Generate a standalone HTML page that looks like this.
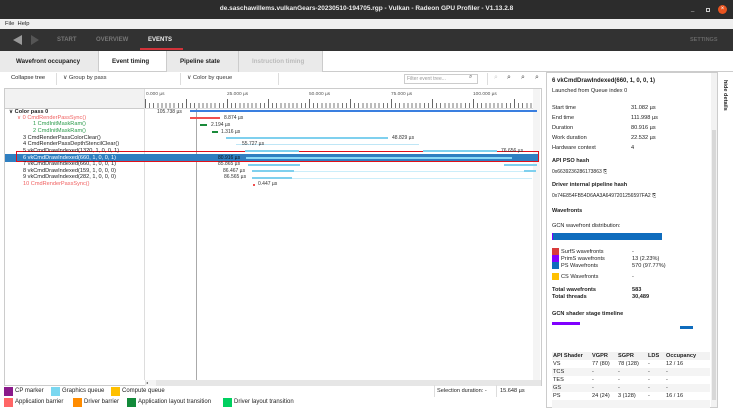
<!DOCTYPE html>
<html><head><meta charset="utf-8"><style>
*{margin:0;padding:0;box-sizing:border-box}
body{width:733px;height:412px;overflow:hidden;background:#fff;font-family:"Liberation Sans",sans-serif;font-size:6px;color:#222;position:relative}
.a{position:absolute;white-space:nowrap}
.b{font-weight:bold}
.bar{position:absolute;height:2px}
.lb{position:absolute;font-size:5px;color:#333;white-space:nowrap}
.r{position:absolute;font-size:5.6px;white-space:nowrap}
</style></head><body>
<!-- title bar -->
<div class="a" style="left:0;top:0;width:733px;height:19px;background:#2c2c2c"></div>
<div class="a b" style="left:0;width:733px;top:5px;text-align:center;color:#eee;font-size:6.5px">de.saschawillems.vulkanGears-20230510-194705.rgp - Vulkan - Radeon GPU Profiler - V1.13.2.8</div>
<div class="a" style="left:691px;top:6px;color:#ccc;font-size:6px">_</div>
<div class="a" style="left:706px;top:8px;width:4px;height:4px;border:1px solid #ccc"></div>
<div class="a" style="left:718px;top:5px;width:9px;height:9px;border-radius:50%;background:#e95420;color:#fff;font-size:6px;text-align:center;line-height:9px">×</div>
<!-- menu -->
<div class="a" style="left:0;top:19px;width:733px;height:10px;background:#efefef"></div>
<div class="a" style="left:5px;top:21px;font-size:5.8px">File&nbsp;&nbsp;Help</div>
<!-- nav -->
<div class="a" style="left:0;top:29px;width:733px;height:22px;background:#323232"></div>
<div class="a" style="left:13px;top:35px;width:0;height:0;border-top:5px solid transparent;border-bottom:5px solid transparent;border-right:9px solid #999"></div>
<div class="a" style="left:31px;top:35px;width:0;height:0;border-top:5px solid transparent;border-bottom:5px solid transparent;border-left:8px solid #555"></div>
<div class="a b" style="left:57px;top:37px;color:#777;font-size:6px">START</div>
<div class="a b" style="left:96px;top:37px;color:#777;font-size:6px">OVERVIEW</div>
<div class="a b" style="left:148px;top:37px;color:#eee;font-size:6px">EVENTS</div>
<div class="a" style="left:140px;top:48px;width:43px;height:2px;background:#d2333a"></div>
<div class="a b" style="left:690px;top:37px;color:#666;font-size:5.5px">SETTINGS</div>
<!-- tabs -->
<div class="a" style="left:0;top:51px;width:733px;height:21px;background:#fff;border-bottom:1px solid #ccc"></div>
<div class="a" style="left:0;top:51px;width:99px;height:21px;background:#eaeaea;border-right:1px solid #ccc"></div>
<div class="a" style="left:166px;top:51px;width:72px;height:21px;background:#eaeaea;border-left:1px solid #ccc"></div>
<div class="a" style="left:238px;top:51px;width:85px;height:21px;background:#eaeaea;border-left:1px solid #ccc;border-right:1px solid #ccc"></div>
<div class="a b" style="left:16px;top:58px;font-size:6.2px">Wavefront occupancy</div>
<div class="a b" style="left:112px;top:58px;font-size:6.2px">Event timing</div>
<div class="a b" style="left:180px;top:58px;font-size:6.2px">Pipeline state</div>
<div class="a b" style="left:252px;top:58px;font-size:6.2px;color:#bbb">Instruction timing</div>
<!-- toolbar -->
<div class="a" style="left:11px;top:75px;font-size:5.8px">Collapse tree</div>
<div class="a" style="left:56px;top:73px;width:1px;height:12px;background:#ddd"></div>
<div class="a" style="left:63px;top:75px;font-size:5.8px;color:#333">∨ Group by pass</div>
<div class="a" style="left:180px;top:73px;width:1px;height:12px;background:#ddd"></div>
<div class="a" style="left:187px;top:75px;font-size:5.8px;color:#333">∨ Color by queue</div>
<div class="a" style="left:278px;top:73px;width:1px;height:12px;background:#ddd"></div>
<div class="a" style="left:404px;top:74px;width:74px;height:10px;border:1px solid #ccc;font-size:5px;color:#999;padding:1px 2px">Filter event tree...</div>
<div class="a" style="left:469px;top:74px;font-size:6px;color:#555">⌕</div>
<div class="a" style="left:487px;top:73px;width:1px;height:12px;background:#ddd"></div>
<div class="a" style="left:494px;top:74px;font-size:7px;color:#ccc">⌕</div>
<div class="a" style="left:507px;top:74px;font-size:7px;color:#444">⌕</div>
<div class="a" style="left:521px;top:74px;font-size:7px;color:#444">⌕</div>
<div class="a" style="left:535px;top:74px;font-size:7px;color:#444">⌕</div>
<!-- tree area -->
<div class="a" style="left:4px;top:88px;width:538px;height:298px;border:1px solid #ccc"></div>
<div class="a" style="left:5px;top:89px;width:139px;height:20px;background:#f2f2f2;border-bottom:1px solid #ccc"></div>
<div class="a" style="left:144px;top:89px;width:1px;height:291px;background:#ddd"></div>
<div class="a" style="left:196px;top:108px;width:1px;height:272px;background:#aaa"></div>
<div class="a" style="left:145px;top:89px;width:388px;height:20px;background:#fff;border-bottom:1px solid #ddd"></div>
<div class="a" style="left:146px;top:92px;font-size:4.8px;color:#555">0.000 µs</div>
<div class="a" style="left:227px;top:92px;font-size:4.8px;color:#555">25.000 µs</div>
<div class="a" style="left:309px;top:92px;font-size:4.8px;color:#555">50.000 µs</div>
<div class="a" style="left:391px;top:92px;font-size:4.8px;color:#555">75.000 µs</div>
<div class="a" style="left:473px;top:92px;font-size:4.8px;color:#555">100.000 µs</div>
<div class="a" style="left:145px;top:103px;width:388px;height:5px;background:repeating-linear-gradient(90deg,#777 0 1px,transparent 1px 4.1px)"></div>
<div class="a" style="left:145px;top:99px;width:388px;height:9px;background:repeating-linear-gradient(90deg,#666 0 1px,transparent 1px 41px)"></div>
<div class="a" style="left:533px;top:89px;width:7px;height:291px;background:#f4f4f4"></div>
<!-- selected row -->
<div class="a" style="left:5px;top:154px;width:533px;height:8px;background:#2f7fc1"></div>
<div class="a" style="left:16px;top:151px;width:523px;height:11px;border:1.3px solid #e0101a"></div>
<!-- tree labels -->
<div class="r b" style="left:9px;top:109px">∨ Color pass 0</div>
<div class="r" style="left:17px;top:115px;color:#f06060">∨ 0 CmdRenderPassSync()</div>
<div class="r" style="left:33px;top:121px;color:#2a9a4a">1 CmdInitMaskRam()</div>
<div class="r" style="left:33px;top:128px;color:#2a9a4a">2 CmdInitMaskRam()</div>
<div class="r" style="left:23px;top:135px">3 CmdRenderPassColorClear()</div>
<div class="r" style="left:23px;top:141px">4 CmdRenderPassDepthStencilClear()</div>
<div class="r" style="left:23px;top:148px">5 vkCmdDrawIndexed(1320, 1, 0, 0, 1)</div>
<div class="r" style="left:23px;top:155px;color:#fff">6 vkCmdDrawIndexed(660, 1, 0, 0, 1)</div>
<div class="r" style="left:23px;top:161px">7 vkCmdDrawIndexed(660, 1, 0, 0, 1)</div>
<div class="r" style="left:23px;top:168px">8 vkCmdDrawIndexed(159, 1, 0, 0, 0)</div>
<div class="r" style="left:23px;top:174px">9 vkCmdDrawIndexed(282, 1, 0, 0, 0)</div>
<div class="r" style="left:23px;top:181px;color:#f06060">10 CmdRenderPassSync()</div>
<!-- timeline bars -->
<div class="lb" style="left:157px;top:109px">105.738 µs</div>
<div class="bar" style="left:190px;top:110px;width:347px;height:1.5px;background:#3a7fe0"></div>
<div class="bar" style="left:190px;top:117px;width:30px;background:#f05050"></div>
<div class="lb" style="left:224px;top:115px">8.874 µs</div>
<div class="bar" style="left:200px;top:124px;width:7px;background:#1a8a3a"></div>
<div class="lb" style="left:211px;top:122px">2.194 µs</div>
<div class="bar" style="left:212px;top:131px;width:6px;background:#1a8a3a"></div>
<div class="lb" style="left:221px;top:129px">1.316 µs</div>
<div class="bar" style="left:226px;top:137px;width:162px;background:#7fd0ee"></div>
<div class="lb" style="left:392px;top:135px">48.829 µs</div>
<div class="bar" style="left:236px;top:144px;width:183px;height:1px;background:#bfe6f6"></div>
<div class="lb" style="left:242px;top:141px">55.727 µs</div>
<div class="bar" style="left:245px;top:150px;width:54px;background:#7fd0ee"></div>
<div class="bar" style="left:423px;top:150px;width:74px;background:#7fd0ee"></div>
<div class="lb" style="left:501px;top:148px">76.656 µs</div>
<div class="lb" style="left:218px;top:155px;color:#111">80.916 µs</div>
<div class="bar" style="left:246px;top:157px;width:266px;background:#8ad8f6"></div>
<div class="bar" style="left:248px;top:164px;width:52px;background:#7fd0ee"></div>
<div class="bar" style="left:504px;top:164px;width:33px;background:#7fd0ee"></div>
<div class="lb" style="left:218px;top:161px">85.865 µs</div>
<div class="bar" style="left:252px;top:170px;width:42px;background:#7fd0ee"></div>
<div class="bar" style="left:294px;top:170.5px;width:230px;height:1px;background:#cceefa"></div>
<div class="bar" style="left:524px;top:170px;width:12px;background:#7fd0ee"></div>
<div class="lb" style="left:223px;top:168px">86.467 µs</div>
<div class="bar" style="left:252px;top:177px;width:40px;background:#7fd0ee"></div>
<div class="bar" style="left:292px;top:177.5px;width:240px;height:1px;background:#cceefa"></div>
<div class="lb" style="left:224px;top:174px">86.565 µs</div>
<div class="bar" style="left:253px;top:184px;width:2px;background:#f05050"></div>
<div class="lb" style="left:258px;top:181px">0.447 µs</div>
<!-- bottom scrollbar -->
<div class="a" style="left:145px;top:380px;width:396px;height:6px;background:#e6e6e6"></div>
<div class="a" style="left:146px;top:380px;width:10px;height:6px;background:#f4f4f4;font-size:4px;color:#555">◂</div>
<!-- legend -->
<div class="a" style="left:0;top:386px;width:540px;height:26px;background:#fff"></div>
<div class="a" style="left:4px;top:387px;width:9px;height:9px;background:#8b1a8b"></div><div class="a" style="left:15px;top:388px">CP marker</div>
<div class="a" style="left:51px;top:387px;width:9px;height:9px;background:#7ad7f0"></div><div class="a" style="left:62px;top:388px">Graphics queue</div>
<div class="a" style="left:111px;top:387px;width:9px;height:9px;background:#ffc000"></div><div class="a" style="left:122px;top:388px">Compute queue</div>
<div class="a" style="left:4px;top:398px;width:9px;height:9px;background:#ff6666"></div><div class="a" style="left:15px;top:399px">Application barrier</div>
<div class="a" style="left:73px;top:398px;width:9px;height:9px;background:#ff8c00"></div><div class="a" style="left:84px;top:399px">Driver barrier</div>
<div class="a" style="left:127px;top:398px;width:9px;height:9px;background:#128a3a"></div><div class="a" style="left:138px;top:399px">Application layout transition</div>
<div class="a" style="left:223px;top:398px;width:9px;height:9px;background:#00d060"></div><div class="a" style="left:234px;top:399px">Driver layout transition</div>
<div class="a" style="left:434px;top:385px;width:1px;height:12px;background:#ddd"></div>
<div class="a" style="left:437px;top:388px;font-size:5.6px">Selection duration: -</div>
<div class="a" style="left:496px;top:385px;width:1px;height:12px;background:#ddd"></div>
<div class="a" style="left:500px;top:388px;font-size:5.6px">15.648 µs</div>
<!-- right panel -->
<div class="a" style="left:546px;top:72px;width:172px;height:336px;border:1px solid #ccc"></div>
<div class="a" style="left:711px;top:73px;width:6px;height:334px;background:#f2f2f2"></div>
<div class="a" style="left:712px;top:130px;width:4px;height:270px;background:#d8d8d8"></div>
<div class="a" style="left:718px;top:72px;width:15px;height:340px;background:#fff"></div>
<div class="a b" style="left:722px;top:80px;writing-mode:vertical-rl;font-size:5.6px">hide details</div>
<div class="r b" style="left:552px;top:78px;font-size:6px">6 vkCmdDrawIndexed(660, 1, 0, 0, 1)</div>
<div class="r" style="left:552px;top:88px">Launched from Queue index 0</div>
<div class="r" style="left:552px;top:105px">Start time</div><div class="r" style="left:631px;top:105px">31.082 µs</div>
<div class="r" style="left:552px;top:115px">End time</div><div class="r" style="left:631px;top:115px">111.998 µs</div>
<div class="r" style="left:552px;top:125px">Duration</div><div class="r" style="left:631px;top:125px">80.916 µs</div>
<div class="r" style="left:552px;top:135px">Work duration</div><div class="r" style="left:631px;top:135px">22.532 µs</div>
<div class="r" style="left:552px;top:145px">Hardware context</div><div class="r" style="left:631px;top:145px">4</div>
<div class="r b" style="left:552px;top:158px">API PSO hash</div>
<div class="r" style="left:552px;top:169px;font-size:5px">0x6639236286173863 ⎘</div>
<div class="r b" style="left:552px;top:182px">Driver internal pipeline hash</div>
<div class="r" style="left:552px;top:193px;font-size:5px">0x74E854FB54D6AA3A6497201256597FA2 ⎘</div>
<div class="r b" style="left:552px;top:208px">Wavefronts</div>
<div class="r" style="left:552px;top:223px">GCN wavefront distribution:</div>
<div class="a" style="left:552px;top:233px;width:110px;height:7px;background:#0f6cbd;border-left:1px solid #8000ff"></div>
<div class="a" style="left:552px;top:248px;width:7px;height:7px;background:#d83b3b"></div>
<div class="a" style="left:552px;top:255px;width:7px;height:7px;background:#8000ff"></div>
<div class="a" style="left:552px;top:262px;width:7px;height:7px;background:#0f6cbd"></div>
<div class="a" style="left:552px;top:273px;width:7px;height:7px;background:#ffc000"></div>
<div class="r" style="left:561px;top:249px">SurfS wavefronts</div><div class="r" style="left:632px;top:249px">-</div>
<div class="r" style="left:561px;top:256px">PrimS wavefronts</div><div class="r" style="left:632px;top:256px">13 (2.23%)</div>
<div class="r" style="left:561px;top:263px">PS Wavefronts</div><div class="r" style="left:632px;top:263px">570 (97.77%)</div>
<div class="r" style="left:561px;top:274px">CS Wavefronts</div><div class="r" style="left:632px;top:274px">-</div>
<div class="r b" style="left:552px;top:287px">Total wavefronts</div><div class="r b" style="left:632px;top:287px">583</div>
<div class="r b" style="left:552px;top:294px">Total threads</div><div class="r b" style="left:632px;top:294px">30,489</div>
<div class="r b" style="left:552px;top:311px">GCN shader stage timeline</div>
<div class="a" style="left:552px;top:322px;width:28px;height:3px;background:#8000ff"></div>
<div class="a" style="left:680px;top:326px;width:13px;height:3px;background:#0f6cbd"></div>
<div class="a" style="left:552px;top:352px;width:158px;height:8px;background:#f2f2f2"></div>
<div class="a" style="left:552px;top:368px;width:158px;height:8px;background:#f4f4f4"></div>
<div class="a" style="left:552px;top:384px;width:158px;height:8px;background:#f4f4f4"></div>
<div class="a" style="left:552px;top:400px;width:158px;height:8px;background:#f4f4f4"></div>
<div class="r b" style="left:553px;top:353px">API Shader</div><div class="r b" style="left:592px;top:353px">VGPR</div><div class="r b" style="left:618px;top:353px">SGPR</div><div class="r b" style="left:648px;top:353px">LDS</div><div class="r b" style="left:666px;top:353px">Occupancy</div>
<div class="r" style="left:553px;top:361px">VS</div><div class="r" style="left:592px;top:361px">77 (80)</div><div class="r" style="left:618px;top:361px">78 (128)</div><div class="r" style="left:648px;top:361px">-</div><div class="r" style="left:666px;top:361px">12 / 16</div>
<div class="r" style="left:553px;top:369px">TCS</div><div class="r" style="left:592px;top:369px">-</div><div class="r" style="left:618px;top:369px">-</div><div class="r" style="left:648px;top:369px">-</div><div class="r" style="left:666px;top:369px">-</div>
<div class="r" style="left:553px;top:377px">TES</div><div class="r" style="left:592px;top:377px">-</div><div class="r" style="left:618px;top:377px">-</div><div class="r" style="left:648px;top:377px">-</div><div class="r" style="left:666px;top:377px">-</div>
<div class="r" style="left:553px;top:385px">GS</div><div class="r" style="left:592px;top:385px">-</div><div class="r" style="left:618px;top:385px">-</div><div class="r" style="left:648px;top:385px">-</div><div class="r" style="left:666px;top:385px">-</div>
<div class="r" style="left:553px;top:393px">PS</div><div class="r" style="left:592px;top:393px">24 (24)</div><div class="r" style="left:618px;top:393px">3 (128)</div><div class="r" style="left:648px;top:393px">-</div><div class="r" style="left:666px;top:393px">16 / 16</div>
</body></html>
